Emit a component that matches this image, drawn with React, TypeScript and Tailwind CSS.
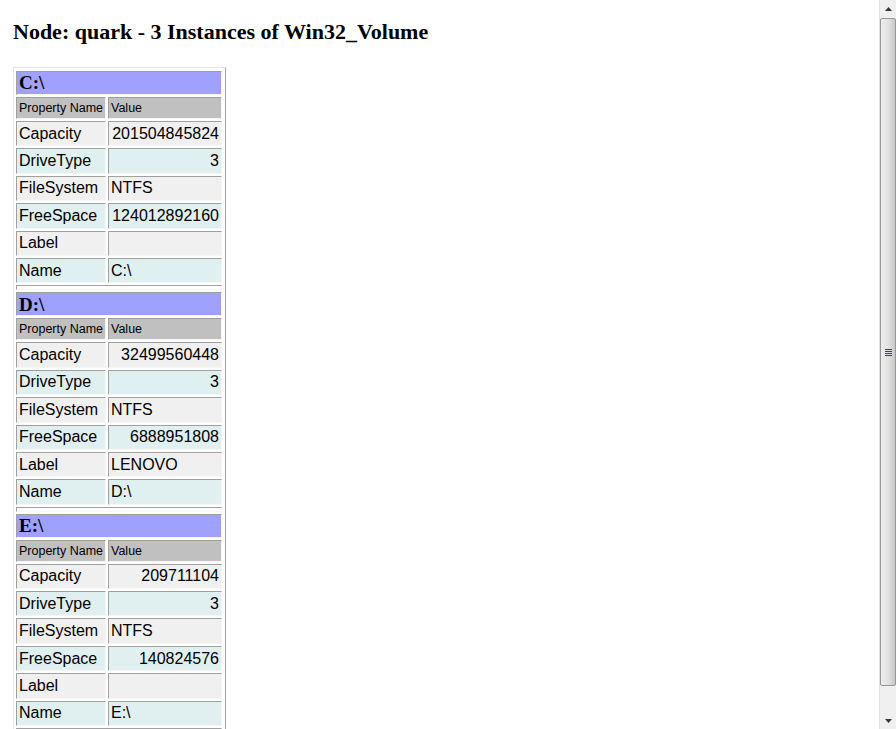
import React from "react";

type Row = [string, string, boolean];
const blocks: { name: string; rows: Row[] }[] = [
  {
    name: "C:\\",
    rows: [
      ["Capacity", "201504845824", true],
      ["DriveType", "3", true],
      ["FileSystem", "NTFS", false],
      ["FreeSpace", "124012892160", true],
      ["Label", "", false],
      ["Name", "C:\\", false],
    ],
  },
  {
    name: "D:\\",
    rows: [
      ["Capacity", "32499560448", true],
      ["DriveType", "3", true],
      ["FileSystem", "NTFS", false],
      ["FreeSpace", "6888951808", true],
      ["Label", "LENOVO", false],
      ["Name", "D:\\", false],
    ],
  },
  {
    name: "E:\\",
    rows: [
      ["Capacity", "209711104", true],
      ["DriveType", "3", true],
      ["FileSystem", "NTFS", false],
      ["FreeSpace", "140824576", true],
      ["Label", "", false],
      ["Name", "E:\\", false],
    ],
  },
];

const cellBorder =
  "border border-t-[#a0a0a0] border-l-[#a0a0a0] border-r-[#f6f6f6] border-b-[#f6f6f6]";

function Block({ name, rows }: { name: string; rows: Row[] }) {
  return (
    <>
      <div
        className={`col-span-2 h-[24px] bg-[#a0a0ff] ${cellBorder} flex items-center pl-[2px] pt-[1px] font-bold text-[19px] text-black`}
        style={{ fontFamily: '"Liberation Serif", serif' }}
      >
        {name}
      </div>
      <div className={`h-[22px] bg-[#c0c0c0] ${cellBorder} flex items-center pl-[2px] pt-[1px] text-[12.5px]`}>
        Property Name
      </div>
      <div className={`h-[22px] bg-[#c0c0c0] ${cellBorder} flex items-center pl-[2px] pt-[1px] text-[12.5px]`}>
        Value
      </div>
      {rows.map(([k, v, num], i) => {
        const bg = i % 2 === 0 ? "bg-[#f0f0f0]" : "bg-[#e0f0f0]";
        return (
          <React.Fragment key={k}>
            <div className={`h-[25.4px] ${bg} ${cellBorder} flex items-center pl-[2px] text-[16px]`}>
              {k}
            </div>
            <div
              className={`h-[25.4px] ${bg} ${cellBorder} flex items-center px-[2px] text-[16px] ${
                num ? "justify-end" : "justify-start"
              }`}
            >
              {v}
            </div>
          </React.Fragment>
        );
      })}
      <div className={`col-span-2 h-[5px] bg-white ${cellBorder}`} />
    </>
  );
}

function ScrollBar() {
  return (
    <div className="w-[17px] h-[729px] flex flex-col bg-[#f0f0f0] border-l border-[#e4e4e4]">
      <div className="h-[17px] flex items-center justify-center">
        <svg width="7" height="4" viewBox="0 0 7 4">
          <polygon points="3.5,0 7,4 0,4" fill="#3a3040" />
        </svg>
      </div>
      <div className="flex-1 flex flex-col pt-[1px]">
        <div className="h-[668px] rounded-[2px] border border-[#979797] bg-linear-to-r from-[#ededed] via-[#e2e2e2] to-[#c8c8c8] flex items-center justify-center">
          <div className="flex flex-col gap-[1px]">
            <div className="w-[7px] h-[1px] bg-[#4a3f52]" />
            <div className="w-[7px] h-[1px] bg-[#4a3f52]" />
            <div className="w-[7px] h-[1px] bg-[#4a3f52]" />
            <div className="w-[7px] h-[1px] bg-[#4a3f52]" />
          </div>
        </div>
      </div>
      <div className="h-[17px] flex items-center justify-center">
        <svg width="7" height="4" viewBox="0 0 7 4">
          <polygon points="0,0 7,0 3.5,4" fill="#3a3040" />
        </svg>
      </div>
    </div>
  );
}

export default function App() {
  return (
    <div className="w-[896px] h-[729px] flex overflow-hidden bg-white">
      <div
        className="flex-1 overflow-hidden pl-[13px] text-black"
        style={{ fontFamily: '"Liberation Sans", Arial, sans-serif' }}
      >
        <h2
          className="mt-[19px] h-[25px] leading-[25px] text-[22px] font-bold"
          style={{ fontFamily: '"Liberation Serif", serif' }}
        >
          Node: quark - 3 Instances of Win32_Volume
        </h2>
        <div className="mt-[23px] inline-block border border-t-[#e6e6e6] border-l-[#e6e6e6] border-r-[#a0a0a0] border-b-[#a0a0a0] pl-[2px] pr-[3px] pt-[3px] pb-[2px]">
          <div className="grid grid-cols-[90px_114px] gap-[2px]">
            {blocks.map((b) => (
              <Block key={b.name} name={b.name} rows={b.rows} />
            ))}
          </div>
        </div>
      </div>
      <ScrollBar />
    </div>
  );
}
